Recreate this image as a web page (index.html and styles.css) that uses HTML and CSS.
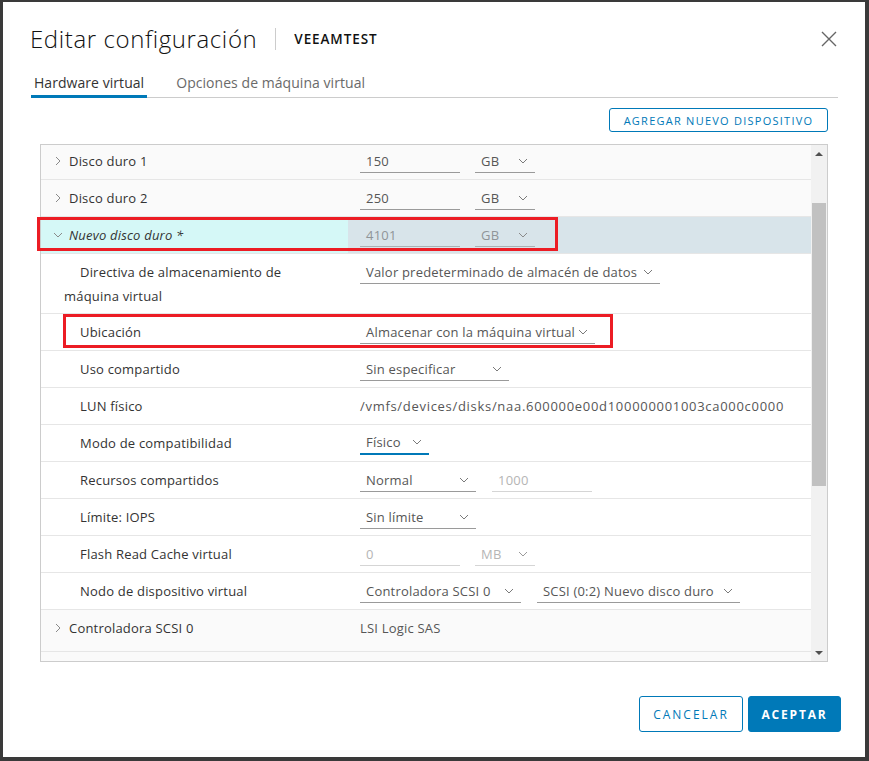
FILE: index.html
```html
<!DOCTYPE html>
<html lang="es">
<head>
<meta charset="utf-8">
<title>Editar configuración</title>
<link rel="stylesheet" href="styles.css">
</head>
<body>
<div class="dialog">
  <div class="header">
    <h1 class="title">Editar configuración</h1>
    <span class="divider"></span>
    <span class="vmname">VEEAMTEST</span>
    <span class="close">
      <svg width="16" height="16" viewBox="0 0 16 16"><path d="M1 1 L15 15 M15 1 L1 15" stroke="#666" stroke-width="1.4" fill="none"/></svg>
    </span>
  </div>
  <div class="tabs">
    <span class="tab active">Hardware virtual</span>
    <span class="tab">Opciones de máquina virtual</span>
  </div>
  <div class="content">
    <div class="toolbar"><span class="btn-add">AGREGAR NUEVO DISPOSITIVO</span></div>
    <div class="gridbox">
      <div class="rows">
        <div class="rows-inner">
          <div class="row head">
            <div class="label"><svg class="chev-r" width="6" height="10" viewBox="0 0 6 10"><path d="M1 1 L5 5 L1 9" stroke="#8a8a8a" fill="none"/></svg>Disco duro 1</div>
            <div class="value">
              <span class="field w100">150</span>
              <span class="field w60">GB<svg class="chev" width="10" height="6" viewBox="0 0 10 6"><path d="M1 1 L5 5 L9 1" stroke="#7a7a7a" fill="none"/></svg></span>
            </div>
          </div>
          <div class="row head">
            <div class="label"><svg class="chev-r" width="6" height="10" viewBox="0 0 6 10"><path d="M1 1 L5 5 L1 9" stroke="#8a8a8a" fill="none"/></svg>Disco duro 2</div>
            <div class="value">
              <span class="field w100">250</span>
              <span class="field w60">GB<svg class="chev" width="10" height="6" viewBox="0 0 10 6"><path d="M1 1 L5 5 L9 1" stroke="#7a7a7a" fill="none"/></svg></span>
            </div>
          </div>
          <div class="row selected">
            <div class="label sel-label"><svg class="chev-d" width="10" height="6" viewBox="0 0 10 6"><path d="M1 1 L5 5 L9 1" stroke="#8a8a8a" fill="none"/></svg><em>Nuevo disco duro *</em></div>
            <div class="value">
              <span class="field w100 dis-sel">4101</span>
              <span class="field w60 dis-sel">GB<svg class="chev" width="10" height="6" viewBox="0 0 10 6"><path d="M1 1 L5 5 L9 1" stroke="#8a8a8a" fill="none"/></svg></span>
            </div>
          </div>
          <div class="row tall">
            <div class="label child">Directiva de almacenamiento de máquina virtual</div>
            <div class="value top">
              <span class="field w300">Valor predeterminado de almacén de datos<svg class="chev" width="10" height="6" viewBox="0 0 10 6"><path d="M1 1 L5 5 L9 1" stroke="#7a7a7a" fill="none"/></svg></span>
            </div>
          </div>
          <div class="row">
            <div class="label child">Ubicación</div>
            <div class="value">
              <span class="field w235">Almacenar con la máquina virtual<svg class="chev" width="10" height="6" viewBox="0 0 10 6"><path d="M1 1 L5 5 L9 1" stroke="#7a7a7a" fill="none"/></svg></span>
            </div>
          </div>
          <div class="row">
            <div class="label child">Uso compartido</div>
            <div class="value">
              <span class="field w149">Sin especificar<svg class="chev" width="10" height="6" viewBox="0 0 10 6"><path d="M1 1 L5 5 L9 1" stroke="#7a7a7a" fill="none"/></svg></span>
            </div>
          </div>
          <div class="row">
            <div class="label child">LUN físico</div>
            <div class="value"><span class="plain lun">/vmfs/devices/disks/naa.600000e00d100000001003ca000c0000</span></div>
          </div>
          <div class="row">
            <div class="label child">Modo de compatibilidad</div>
            <div class="value">
              <span class="field w69 active-field">Físico<svg class="chev" width="10" height="6" viewBox="0 0 10 6"><path d="M1 1 L5 5 L9 1" stroke="#7a7a7a" fill="none"/></svg></span>
            </div>
          </div>
          <div class="row">
            <div class="label child">Recursos compartidos</div>
            <div class="value gap16">
              <span class="field w116">Normal<svg class="chev" width="10" height="6" viewBox="0 0 10 6"><path d="M1 1 L5 5 L9 1" stroke="#7a7a7a" fill="none"/></svg></span>
              <span class="field w100 dis">1000</span>
            </div>
          </div>
          <div class="row">
            <div class="label child">Límite: IOPS</div>
            <div class="value">
              <span class="field w116">Sin límite<svg class="chev" width="10" height="6" viewBox="0 0 10 6"><path d="M1 1 L5 5 L9 1" stroke="#7a7a7a" fill="none"/></svg></span>
            </div>
          </div>
          <div class="row">
            <div class="label child">Flash Read Cache virtual</div>
            <div class="value">
              <span class="field w100 dis">0</span>
              <span class="field w60 dis">MB<svg class="chev" width="10" height="6" viewBox="0 0 10 6"><path d="M1 1 L5 5 L9 1" stroke="#9a9a9a" fill="none"/></svg></span>
            </div>
          </div>
          <div class="row">
            <div class="label child">Nodo de dispositivo virtual</div>
            <div class="value gap16">
              <span class="field w161">Controladora SCSI 0<svg class="chev" width="10" height="6" viewBox="0 0 10 6"><path d="M1 1 L5 5 L9 1" stroke="#7a7a7a" fill="none"/></svg></span>
              <span class="field w203">SCSI (0:2) Nuevo disco duro<svg class="chev" width="10" height="6" viewBox="0 0 10 6"><path d="M1 1 L5 5 L9 1" stroke="#7a7a7a" fill="none"/></svg></span>
            </div>
          </div>
          <div class="row head ctrl">
            <div class="label"><svg class="chev-r" width="6" height="10" viewBox="0 0 6 10"><path d="M1 1 L5 5 L1 9" stroke="#8a8a8a" fill="none"/></svg>Controladora SCSI 0</div>
            <div class="value"><span class="plain">LSI Logic SAS</span></div>
          </div>
          <div class="row head">
            <div class="label">&nbsp;</div>
          </div>
        </div>
      </div>
      <div class="scrollbar">
        <div class="sb-btn"><span class="tri-up"></span></div>
        <div class="sb-track"><div class="sb-thumb"></div></div>
        <div class="sb-btn"><span class="tri-down"></span></div>
      </div>
      <div class="mark mark1"></div>
      <div class="mark mark2"></div>
    </div>
  </div>
  <div class="footer">
    <span class="btn btn-outline">CANCELAR</span>
    <span class="btn btn-primary">ACEPTAR</span>
  </div>
</div>
</body>
</html>
```

FILE: styles.css
```css
* { box-sizing: border-box; }

html, body {
  margin: 0;
  padding: 0;
  height: 761px;
  overflow: hidden;
}

body {
  background: #3a3a3a;
  font-family: "Open Sans", "Liberation Sans", sans-serif;
  font-size: 13px;
  letter-spacing: 0.2px;
  color: #333;
}

.dialog {
  margin: 2px 0 0 3px;
  width: 862px;
  height: 755px;
  background: #fff;
  display: flex;
  flex-direction: column;
  padding: 0 27px 0 28px;
}

/* header */
.header {
  display: flex;
  align-items: center;
  padding-top: 22px;
  height: 52px;
}

.title {
  margin: 0 0 0 -1px;
  font-size: 24px;
  font-weight: 300;
  line-height: 30px;
  color: #111;
  letter-spacing: 0.6px;
}

.divider {
  width: 1px;
  height: 22px;
  background: #ccc;
  margin: 0 18px 0 18px;
}

.vmname {
  font-size: 13.5px;
  font-weight: 600;
  color: #111;
  letter-spacing: 0.9px;
}

.close {
  margin-left: auto;
  margin-right: 1px;
  display: flex;
}

/* tabs */
.tabs {
  margin-top: 16px;
  display: flex;
  border-bottom: 1px solid #ccc;
  height: 28px;
}

.tab {
  font-size: 14px;
  line-height: 25px;
  color: #6a6a6a;
  padding: 0 3px;
  margin-right: 26px;
  letter-spacing: 0.05px;
}

.tab.active {
  color: #333;
  border-bottom: 3px solid #0079b8;
  margin-bottom: -1px;
  height: 28px;
}

/* content */
.content {
  padding: 0 10px 0 9px;
}

.toolbar {
  margin-top: 10px;
  display: flex;
  justify-content: flex-end;
}

.btn-add {
  display: inline-flex;
  align-items: center;
  justify-content: center;
  width: 219px;
  height: 24px;
  border: 1px solid #0079b8;
  border-radius: 3px;
  color: #0079b8;
  font-size: 11px;
  font-weight: 500;
  letter-spacing: 1.25px;
}

.gridbox {
  position: relative;
  margin-top: 12px;
  height: 518px;
  border: 1px solid #ccc;
  display: flex;
}

.rows {
  flex: 1;
  overflow: hidden;
}

.rows-inner {
  margin-top: -2px;
}

.row {
  display: flex;
  align-items: center;
  border-bottom: 1px solid #e6e6e6;
  padding: 6px 0;
  line-height: 24px;
  background: #fff;
}

.row.head {
  background: #fafafa;
}

.row.tall {
  align-items: flex-start;
  padding: 6px 0 5px;
}

.row.ctrl {
  padding: 6px 0 11px;
}

.row.selected {
  background: #d8e4ea;
  padding: 0;
}

.label {
  width: 307px;
  flex: none;
  display: flex;
  align-items: center;
  padding-left: 14px;
  color: #333;
}

.label.child {
  display: block;
  padding-left: 23px;
  padding-right: 24px;
  text-indent: 16px;
}

.sel-label {
  background: #d5f8f7;
  height: 36px;
  padding-left: 12px;
}

.sel-label em {
  font-style: italic;
}

.chev-r {
  margin-right: 8px;
  flex: none;
}

.chev-d {
  margin-right: 6px;
  flex: none;
}

.value {
  display: flex;
  align-items: center;
  gap: 15px;
  padding-left: 12px;
}

.value.gap16 {
  gap: 16px;
}

.value.top {
  align-self: flex-start;
}

.plain {
  color: #565656;
}

.plain.lun {
  letter-spacing: 0.7px;
  white-space: nowrap;
}

.field {
  height: 24px;
  display: flex;
  align-items: center;
  justify-content: space-between;
  padding: 0 6px 0 6px;
  border-bottom: 1px solid #9a9a9a;
  color: #565656;
  white-space: nowrap;
}

.field .chev {
  flex: none;
  margin-right: 1px;
}

.field.active-field {
  border-bottom: 2px solid #0079b8;
}

.field.dis {
  color: #b5b5b5;
  border-bottom-color: #d5d5d5;
}

.field.dis-sel {
  color: #8f9498;
  border-bottom-color: #a9b0b4;
}

.w60 { width: 60px; }
.w69 { width: 69px; }
.w100 { width: 100px; }
.w116 { width: 116px; }
.w149 { width: 149px; }
.w161 { width: 161px; }
.w203 { width: 203px; }
.w235 { width: 235px; }
.w300 { width: 300px; }

/* scrollbar */
.scrollbar {
  width: 16px;
  flex: none;
  background: #f1f1f1;
  display: flex;
  flex-direction: column;
}

.sb-btn {
  height: 17px;
  display: flex;
  align-items: center;
  justify-content: center;
}

.sb-track {
  flex: 1;
}

.sb-thumb {
  margin: 41px 1px 0 1px;
  height: 283px;
  background: #c1c1c1;
}

.tri-up {
  width: 0;
  height: 0;
  border-left: 4px solid transparent;
  border-right: 4px solid transparent;
  border-bottom: 4px solid #505050;
}

.tri-down {
  width: 0;
  height: 0;
  border-left: 4px solid transparent;
  border-right: 4px solid transparent;
  border-top: 4px solid #505050;
}

/* red highlight marks */
.mark {
  position: absolute;
  border: 3px solid #ec1c24;
  pointer-events: none;
}

.mark1 {
  left: -4px;
  top: 72px;
  width: 521px;
  height: 34px;
}

.mark2 {
  left: 22px;
  top: 169px;
  width: 550px;
  height: 34px;
}

/* footer */
.footer {
  margin-top: auto;
  margin-right: -3px;
  padding-bottom: 25px;
  display: flex;
  justify-content: flex-end;
  gap: 5px;
}

.btn {
  height: 36px;
  display: inline-flex;
  align-items: center;
  justify-content: center;
  border-radius: 3px;
  font-size: 12px;
  letter-spacing: 2px;
}

.btn-outline {
  width: 104px;
  border: 1px solid #0079b8;
  color: #0079b8;
  font-weight: 500;
  background: #fff;
}

.btn-primary {
  width: 93px;
  background: #0079b8;
  border: 1px solid #0079b8;
  color: #fff;
  font-weight: 700;
  letter-spacing: 1.8px;
}
```
